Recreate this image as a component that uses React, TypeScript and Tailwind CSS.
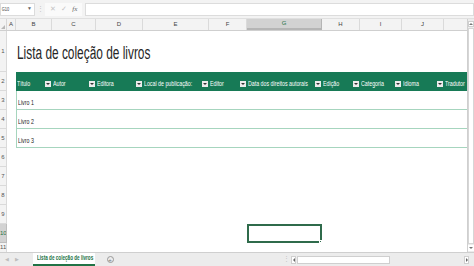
import React from 'react';

const cols = [
  { id: 'A', w: 'w-[9px]' },
  { id: 'B', w: 'w-[36px]' },
  { id: 'C', w: 'w-[44px]' },
  { id: 'D', w: 'w-[47px]' },
  { id: 'E', w: 'w-[66px]' },
  { id: 'F', w: 'w-[38px]' },
  { id: 'G', w: 'w-[75px]' },
  { id: 'H', w: 'w-[38px]' },
  { id: 'I', w: 'w-[42px]' },
  { id: 'J', w: 'w-[42px]' },
  { id: 'K', w: 'w-[60px]' },
];

const headers = ['Título', 'Autor', 'Editora', 'Local de publicação:', 'Editor', 'Data dos direitos autorais', 'Edição', 'Categoria', 'Idioma', 'Tradutor'];

// screenshot is squeezed horizontally, so text gets narrowed
const Sq = ({ children, className = '' }: { children: React.ReactNode; className?: string }) => (
  <span className={'inline-block origin-left scale-x-[0.66] whitespace-nowrap ' + className}>{children}</span>
);

const Caret = () => (
  <div className="w-[6px] h-[6px] shrink-0 bg-[#ececec] flex items-center justify-center">
    <div className="w-0 h-0 border-l-[2px] border-r-[2px] border-t-[2px] border-l-transparent border-r-transparent border-t-[#333]" />
  </div>
);

const RowHead = ({ n, active = false }: { n: number; active?: boolean }) => (
  <div className={active
    ? 'w-[7px] shrink-0 h-full flex items-center justify-center bg-[#d2d2d2] text-[#217346] border-r border-b border-[#bdbdbd] text-[6px]'
    : 'w-[7px] shrink-0 h-full flex items-center justify-center bg-[#f3f3f3] text-[#555] border-r border-b border-[#dadada] text-[6px]'}>
    <span className="overflow-hidden">{n}</span>
  </div>
);

const FormulaBar = () => (
  <div className="h-[19px] shrink-0 bg-[#f3f3f3] flex items-center border-b border-[#e0e0e0]">
    <div className="w-[35px] h-[13px] bg-white border border-[#dcdcdc] flex items-center justify-between pr-[2px]">
      <Sq className="text-[6px] text-[#444] pl-[1px]">G10</Sq>
      <span className="text-[5px] text-[#666]">▼</span>
    </div>
    <div className="w-[10px] flex justify-center text-[7px] text-[#c4c4c4]">⋮</div>
    <div className="w-[37px] h-[13px] bg-[#fafafa] flex items-center justify-around px-[2px]">
      <span className="text-[7px] text-[#c4c4c4]">✕</span>
      <span className="text-[7px] text-[#c4c4c4]">✓</span>
      <span className="text-[7px] italic text-[#666] font-['Liberation_Serif',serif]">fx</span>
    </div>
    <div className="ml-[3px] flex-1 h-[13px] bg-white border border-[#dcdcdc]" />
  </div>
);

const ColHeads = () => (
  <div className="flex h-[12px] shrink-0 bg-[#f3f3f3] border-b border-[#cfcfcf]">
    <div className="w-[7px] shrink-0 border-r border-[#d6d6d6] flex items-end justify-end p-[1px]">
      <div className="w-0 h-0 border-b-[4px] border-l-[4px] border-b-[#b8b8b8] border-l-transparent" />
    </div>
    {cols.map((c) => (
      <div key={c.id} className={c.id === 'G'
        ? c.w + ' shrink-0 flex items-center justify-center text-[6px] text-[#217346] bg-[#d2d2d2] border-r border-b-2 border-[#b5b5b5]'
        : c.w + ' shrink-0 flex items-center justify-center text-[6px] text-[#444] border-r border-[#dadada]'}>
        {c.id !== 'K' && c.id}
      </div>
    ))}
  </div>
);

const Sheet = () => (
  <div className="w-[467px] shrink-0 overflow-hidden flex flex-col">
    <ColHeads />
    {/* row 1 - title */}
    <div className="flex h-[41px] shrink-0">
      <RowHead n={1} />
      <div className="w-[9px] shrink-0" />
      <div className="pt-[11px] pl-[1px]">
        <Sq className="text-[18px] leading-[20px] text-[#262626]">Lista de coleção de livros</Sq>
      </div>
    </div>
    {/* row 2 - table header */}
    <div className="flex h-[19px] shrink-0">
      <RowHead n={2} />
      <div className="w-[9px] shrink-0" />
      <div className="flex bg-[#177a56]">
        {cols.slice(1).map((c, i) => (
          <div key={c.id} className={c.w + ' shrink-0 flex items-end pb-[2px] pl-[1px] pr-[1px] gap-[1px]'}>
            <div className="flex-1 min-w-0 overflow-hidden h-[10px] flex items-end">
              <Sq className="text-[8px] leading-[10px] text-white">{headers[i]}</Sq>
            </div>
            {c.id !== 'K' && <div className="mb-[2px]"><Caret /></div>}
          </div>
        ))}
      </div>
    </div>
    {/* rows 3-5 data */}
    {[1, 2, 3].map((n) => (
      <div key={n} className="flex h-[19px] shrink-0">
        <RowHead n={n + 2} />
        <div className="w-[9px] shrink-0" />
        <div className="flex-1 flex items-end pb-[1px] pl-[1px] border-l border-b border-[#a6d5be]">
          <Sq className="text-[8px] leading-[10px] text-[#222]">{'Livro ' + n}</Sq>
        </div>
      </div>
    ))}
    {[6, 7, 8, 9].map((n) => (
      <div key={n} className="flex h-[19px] shrink-0">
        <RowHead n={n} />
      </div>
    ))}
    {/* row 10 with selected cell G10 */}
    <div className="flex h-[19px] shrink-0">
      <RowHead n={10} active />
      {cols.slice(0, 6).map((c) => <div key={c.id} className={c.w + ' shrink-0'} />)}
      <div className="w-[75px] shrink-0 relative border-2 border-[#2f6b4b]">
        <div className="absolute -right-[2px] -bottom-[2px] w-[3px] h-[3px] bg-[#2f6b4b] border border-white" />
      </div>
    </div>
    <div className="flex flex-1">
      <RowHead n={11} />
    </div>
  </div>
);

const VScroll = () => (
  <div className="w-[7px] shrink-0 bg-[#ececec] border-l border-[#cfcfcf] flex flex-col items-center pt-[2px] pb-[1px]">
    <div className="w-[6px] h-[6px] bg-white border border-[#cfcfcf] flex items-center justify-center">
      <div className="w-0 h-0 border-l-[2px] border-r-[2px] border-b-[2px] border-l-transparent border-r-transparent border-b-[#777]" />
    </div>
    <div className="w-[6px] flex-1 my-[1px] bg-white border border-[#d6d6d6]" />
    <div className="w-[6px] h-[6px] bg-white flex items-center justify-center">
      <div className="w-0 h-0 border-l-[2px] border-r-[2px] border-t-[2px] border-l-transparent border-r-transparent border-t-[#777]" />
    </div>
  </div>
);

const TabBar = () => (
  <div className="h-[14px] shrink-0 bg-[#ececec] border-t border-[#cfcfcf] flex items-stretch">
    <div className="w-[33px] shrink-0 flex items-center gap-[6px] pl-[5px] text-[5px] text-[#bdbdbd]">
      <span>◀</span>
      <span>▶</span>
    </div>
    <div className="w-[62px] shrink-0 bg-white border-b-2 border-[#217346] flex items-center pl-[4px] overflow-hidden">
      <Sq className="text-[7px] font-bold text-[#217346]">Lista de coleção de livros</Sq>
    </div>
    <div className="w-[30px] shrink-0 flex items-center justify-center">
      <div className="w-[7px] h-[7px] rounded-full border border-[#999] flex items-center justify-center text-[6px] leading-none text-[#777]">+</div>
    </div>
    <div className="flex-1" />
    <div className="w-[10px] flex items-center justify-center text-[7px] text-[#c4c4c4]">⋮</div>
    <div className="w-[183px] shrink-0 flex items-center pr-[5px]">
      <div className="w-[5px] h-[8px] bg-white border border-[#cfcfcf] flex items-center justify-center">
        <div className="w-0 h-0 border-t-[2px] border-b-[2px] border-r-[2px] border-t-transparent border-b-transparent border-r-[#666]" />
      </div>
      <div className="w-[93px] h-[8px] ml-[1px] bg-white border border-[#cfcfcf]" />
      <div className="flex-1" />
      <div className="w-[5px] h-[8px] bg-white border border-[#cfcfcf] flex items-center justify-center">
        <div className="w-0 h-0 border-t-[2px] border-b-[2px] border-l-[2px] border-t-transparent border-b-transparent border-l-[#666]" />
      </div>
    </div>
  </div>
);

export default function App() {
  return (
    <div className="w-[474px] h-[266px] overflow-hidden bg-white flex flex-col font-['Liberation_Sans',Arial,sans-serif]">
      <FormulaBar />
      <div className="flex flex-1 min-h-0">
        <Sheet />
        <VScroll />
      </div>
      <TabBar />
    </div>
  );
}
